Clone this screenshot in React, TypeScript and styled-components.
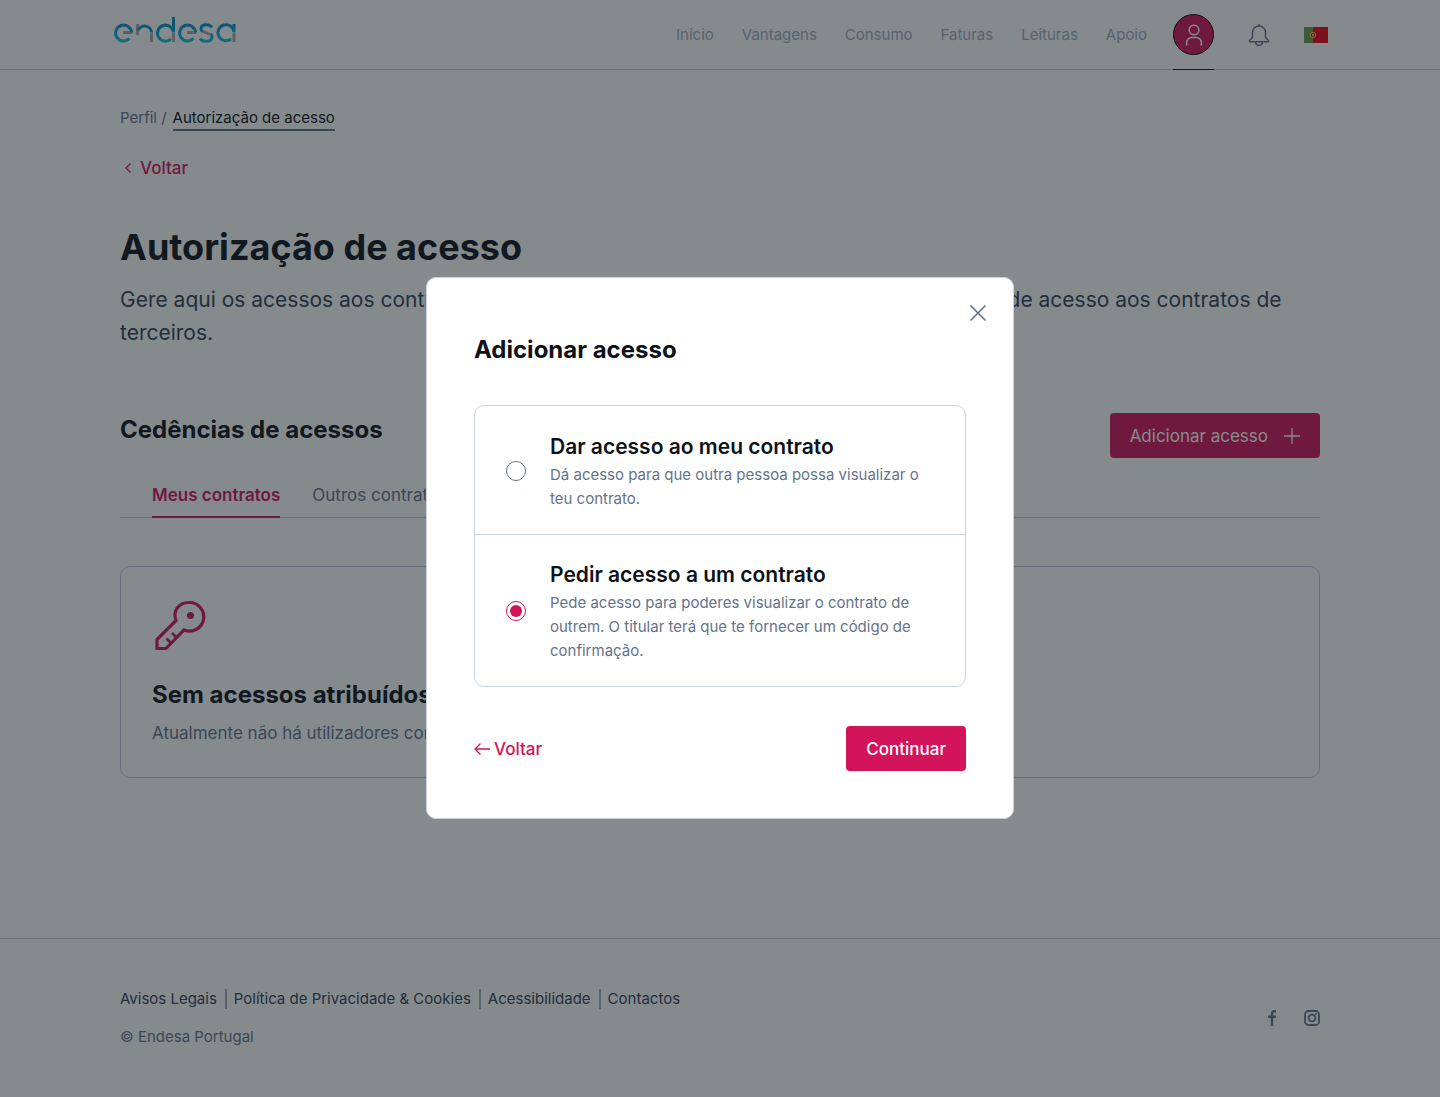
import React, { useState } from "react";
import styled, { createGlobalStyle, css } from "styled-components";

const color = {
  brand: "#d3135a",
  ink: "#0d1219",
  body: "#334155",
  muted: "#64748b",
  soft: "#a0adbf",
  line: "#cbd5e1",
  rule: "#bcc5d6",
};

const GlobalStyle = createGlobalStyle`
  *, *::before, *::after { box-sizing: border-box; }
  body {
    margin: 0;
    background: #fff;
    color: ${color.ink};
    font-family: Inter, "Liberation Sans", sans-serif;
    font-size: 15px;
    line-height: 24px;
  }
  h1, h2, h3, p, ul { margin: 0; padding: 0; }
  ul { list-style: none; }
  a { color: inherit; text-decoration: none; }
  button { font: inherit; border: 0; background: none; padding: 0; cursor: pointer; }
`;

const Page = styled.div`
  display: flex;
  flex-direction: column;
  min-height: 100vh;
`;

const Header = styled.header`
  display: flex;
  justify-content: space-between;
  height: 70px;
  padding: 0 112px 0 114px;
  border-bottom: 1px solid ${color.rule};
`;

const LogoLink = styled.a`
  padding-top: 16px;
`;

const Nav = styled.nav`
  display: flex;
  align-items: center;
  color: ${color.soft};
`;

const NavList = styled.ul`
  display: flex;
  gap: 28px;
  margin-right: 26px;
`;

const AvatarTab = styled.button`
  display: flex;
  align-items: center;
  align-self: stretch;
  margin-bottom: -1px;
  border-bottom: 1px solid ${color.ink};
`;

const Avatar = styled.span`
  display: flex;
  align-items: center;
  justify-content: center;
  width: 41px;
  height: 41px;
  border: 1px solid #000;
  border-radius: 50%;
  background: ${color.brand};
  color: #fff;
`;

const HeaderIcon = styled.button`
  display: flex;
  margin-left: 33px;
  color: ${color.muted};
`;

const Main = styled.main`
  flex: 1;
  width: 100%;
  max-width: 1440px;
  margin: 0 auto;
  padding: 37px 120px 144px;
`;

const Breadcrumb = styled.nav`
  display: flex;
  gap: 6px;
  color: ${color.muted};
  line-height: 22px;
`;

const Current = styled.a`
  color: ${color.ink};
  border-bottom: 2px solid ${color.muted};
`;

const BackLink = styled.a`
  display: inline-flex;
  align-items: center;
  gap: 4px;
  margin-top: 25px;
  color: ${color.brand};
  font-size: 17px;
  font-weight: 500;
`;

const PageTitle = styled.h1`
  margin-top: 36px;
  font-size: 36px;
  font-weight: 700;
  line-height: 56px;
`;

const Lead = styled.p`
  margin-top: 8px;
  color: ${color.body};
  font-size: 21px;
  line-height: 33px;
`;

const SectionHead = styled.div`
  display: flex;
  justify-content: space-between;
  align-items: flex-start;
  margin-top: 64px;
`;

const Heading = styled.h2`
  font-size: 24px;
  font-weight: 700;
  line-height: 34px;
`;

const Primary = styled.button<{ $medium?: boolean }>`
  display: inline-flex;
  align-items: center;
  gap: 16px;
  height: 45px;
  padding: 0 20px;
  border-radius: 4px;
  background: ${color.brand};
  color: #fff;
  font-size: 17px;
  font-weight: ${(p) => (p.$medium ? 500 : 400)};
`;

const Tabs = styled.div`
  display: flex;
  gap: 32px;
  margin-top: 15px;
  padding: 0 32px;
  border-bottom: 1px solid ${color.rule};
`;

const Tab = styled.button<{ $active?: boolean }>`
  height: 45px;
  margin-bottom: -1px;
  border-bottom: 2px solid transparent;
  color: ${color.muted};
  font-size: 17px;
  ${(p) =>
    p.$active &&
    css`
      color: ${color.brand};
      border-color: ${color.brand};
      font-weight: 600;
    `}
`;

const Card = styled.section`
  margin-top: 48px;
  padding: 31px 31px 30px;
  border: 1px solid ${color.rule};
  border-radius: 10px;
  svg { display: block; }
`;

const CardTitle = styled(Heading)`
  margin-top: 24px;
`;

const CardText = styled.p`
  margin-top: 8px;
  color: ${color.muted};
  font-size: 17px;
  line-height: 27px;
`;

const Footer = styled.footer`
  border-top: 1px solid ${color.rule};
`;

const FooterInner = styled.div`
  display: flex;
  justify-content: space-between;
  align-items: center;
  max-width: 1440px;
  margin: 0 auto;
  padding: 48px 120px;
`;

const Links = styled.ul`
  display: flex;
  align-items: center;
  height: 24px;
  color: ${color.body};
  li + li {
    margin-left: 8px;
    padding-left: 7px;
    border-left: 2px solid ${color.soft};
  }
  li { line-height: 20px; }
`;

const Copyright = styled.p`
  margin-top: 14px;
  color: ${color.muted};
`;

const Social = styled.div`
  display: flex;
  gap: 24px;
  color: ${color.muted};
  a { display: flex; }
`;

const Overlay = styled.div`
  position: fixed;
  inset: 0;
  display: flex;
  align-items: center;
  justify-content: center;
  padding-bottom: 1px;
  background: rgba(21, 31, 36, 0.52);
`;

const Dialog = styled.form`
  position: relative;
  width: 588px;
  max-width: 100%;
  padding: 48px 47px 47px;
  border: 1px solid ${color.line};
  border-radius: 10px;
  background: #fff;
`;

const Close = styled.button`
  position: absolute;
  top: 23px;
  right: 23px;
  display: flex;
  color: ${color.muted};
`;

const DialogTitle = styled(Heading)`
  line-height: 48px;
`;

const Options = styled.div`
  margin-top: 31px;
  border: 1px solid ${color.line};
  border-radius: 10px;
`;

const Option = styled.label`
  display: flex;
  align-items: center;
  gap: 24px;
  padding: 25px 31px 23px;
  cursor: pointer;
  & + & {
    padding-top: 24px;
    border-top: 1px solid ${color.line};
  }
`;

const Radio = styled.input`
  appearance: none;
  flex: none;
  width: 20px;
  height: 20px;
  margin: 0;
  border: 1px solid ${color.muted};
  border-radius: 50%;
  &:checked {
    padding: 3px;
    border-color: ${color.brand};
    background: ${color.brand} content-box;
  }
`;

const OptionTitle = styled.strong`
  display: block;
  font-size: 21px;
  font-weight: 600;
  line-height: 32px;
`;

const OptionText = styled.span`
  display: block;
  color: ${color.muted};
`;

const Actions = styled.div`
  display: flex;
  justify-content: space-between;
  align-items: center;
  margin-top: 39px;
`;

const BackButton = styled.button`
  display: inline-flex;
  align-items: center;
  gap: 4px;
  color: ${color.brand};
  font-size: 17px;
  font-weight: 500;
`;

const Logo = () => (
  <svg width="122" height="28" viewBox="0 0 122 28" fill="none" strokeWidth="3">
    <defs>
      <linearGradient id="sea" x1="0" y1="6" x2="0" y2="27" gradientUnits="userSpaceOnUse">
        <stop offset="0" stopColor="#008ccf" />
        <stop offset="1" stopColor="#12c4dc" />
      </linearGradient>
    </defs>
    <g stroke="#b0a9a6">
      <path d="M9 16.5h9M23.5 8v11M37.5 17v9M59.5 17v9M73 16.5h9M120 17v9M87 14.5l9 4" />
    </g>
    <g stroke="url(#sea)">
      <path d="M17.6 16.5A8 8 0 1 0 15.5 22.5" />
      <path d="M24 14.5A7 7 0 0 1 37.5 16.5" />
      <path d="M59.5 1v15.5A8 8 0 1 0 57 23" />
      <path d="M81.6 16.5A8 8 0 1 0 79.5 22.5" />
      <path d="M98 11.5C95.5 7.5 87 7.5 87 13c0 1.500.5 2 1.500 2.500M86 22.500C88.500 26.500 98 26.500 98 20.500c0-1.500-.5-2-1.500-2.500" />
      <path d="M120 8v8.500A8 8 0 1 0 117 23" />
    </g>
  </svg>
);

const UserIcon = () => (
  <svg width="20" height="24" viewBox="0 0 20 24" fill="none" stroke="currentColor" strokeWidth="1.500">
    <circle cx="10" cy="7" r="4.800" />
    <path d="M2.700 22.500v-3a5 5 0 0 1 5-5h4.600a5 5 0 0 1 5 5v3" />
  </svg>
);

const BellIcon = () => (
  <svg width="24" height="24" viewBox="0 0 24 24" fill="none" stroke="currentColor" strokeWidth="1.500" strokeLinejoin="round">
    <path d="M12 1v2M12 3c-4 0-6.500 3-6.500 6.500V14c0 1.500-3 2.500-3 4v.800h19V18c0-1.500-3-2.500-3-4V9.500C18.500 6 16 3 12 3z" />
    <path d="M8.700 19a3.300 3.300 0 0 0 6.600 0" />
  </svg>
);

const FlagIcon = () => (
  <svg width="24" height="16" viewBox="0 0 24 16">
    <path fill="#f00018" d="M0 0h24v16H0z" />
    <path fill="#6f9a50" d="M0 0h9v16H0z" />
    <circle cx="9" cy="8" r="2.600" fill="#e00018" stroke="#f5d327" />
    <circle cx="9" cy="8" r="1" fill="#fff" />
  </svg>
);

const KeyIcon = () => (
  <svg width="56" height="56" viewBox="0 0 56 56" fill="none" stroke={color.brand} strokeWidth="3.200">
    <path d="M5 50.500V41.500L24 22.500C20.500 13 26.500 4.500 37 4.500A14.300 14.300 0 1 1 32 32L14 50.500z" />
    <path d="M14.500 40.500l4.500 4.500M20 35l4.500 4.500" strokeWidth="2.800" />
    <circle cx="38.500" cy="17.500" r="3.500" fill={color.brand} stroke="none" />
  </svg>
);

const options = [
  {
    id: "dar",
    title: "Dar acesso ao meu contrato",
    text: "Dá acesso para que outra pessoa possa visualizar o teu contrato.",
  },
  {
    id: "pedir",
    title: "Pedir acesso a um contrato",
    text: "Pede acesso para poderes visualizar o contrato de outrem. O titular terá que te fornecer um código de confirmação.",
  },
];

export default function App() {
  const [choice, setChoice] = useState("pedir");

  return (
    <>
      <GlobalStyle />
      <Page>
        <Header>
          <LogoLink href="#" aria-label="endesa">
            <Logo />
          </LogoLink>
          <Nav>
            <NavList>
              {["Início", "Vantagens", "Consumo", "Faturas", "Leituras", "Apoio"].map((item) => (
                <li key={item}>
                  <a href="#">{item}</a>
                </li>
              ))}
            </NavList>
            <AvatarTab aria-label="Perfil">
              <Avatar>
                <UserIcon />
              </Avatar>
            </AvatarTab>
            <HeaderIcon aria-label="Notificações">
              <BellIcon />
            </HeaderIcon>
            <HeaderIcon aria-label="Português">
              <FlagIcon />
            </HeaderIcon>
          </Nav>
        </Header>

        <Main>
          <Breadcrumb>
            <a href="#">Perfil /</a>
            <Current href="#">Autorização de acesso</Current>
          </Breadcrumb>
          <BackLink href="#">
            <svg width="16" height="16" viewBox="0 0 16 16" fill="none" stroke="currentColor" strokeWidth="1.300">
              <path d="M10.500 3.500L6 8l4.500 4.500" />
            </svg>
            Voltar
          </BackLink>
          <PageTitle>Autorização de acesso</PageTitle>
          <Lead>
            Gere aqui os acessos aos contratos que tens associados à tua Área Privada, ou então, pede acesso aos
            contratos de terceiros.
          </Lead>

          <SectionHead>
            <Heading>Cedências de acessos</Heading>
            <Primary>
              Adicionar acesso
              <svg width="16" height="16" viewBox="0 0 16 16" fill="none" stroke="currentColor" strokeWidth="1.300">
                <path d="M8 0v16M0 8h16" />
              </svg>
            </Primary>
          </SectionHead>
          <Tabs role="tablist">
            <Tab role="tab" $active>
              Meus contratos
            </Tab>
            <Tab role="tab">Outros contratos</Tab>
          </Tabs>
          <Card>
            <KeyIcon />
            <CardTitle as="h3">Sem acessos atribuídos</CardTitle>
            <CardText>Atualmente não há utilizadores com acesso.</CardText>
          </Card>
        </Main>

        <Footer>
          <FooterInner>
            <div>
              <Links>
                {["Avisos Legais", "Política de Privacidade & Cookies", "Acessibilidade", "Contactos"].map((item) => (
                  <li key={item}>
                    <a href="#">{item}</a>
                  </li>
                ))}
              </Links>
              <Copyright>© Endesa Portugal</Copyright>
            </div>
            <Social>
              <a href="#" aria-label="Facebook">
                <svg width="16" height="18" viewBox="0 0 16 18" fill="none" stroke="currentColor" strokeWidth="2.500">
                  <path d="M12 2.200h-1.500C8.800 2.200 8 3 8 4.500V17M4 7.800h8" />
                </svg>
              </a>
              <a href="#" aria-label="Instagram">
                <svg width="16" height="18" viewBox="0 0 16 18" fill="none" stroke="currentColor" strokeWidth="1.800">
                  <rect x="1" y="2" width="14" height="14" rx="3.500" />
                  <circle cx="8" cy="9" r="3.400" />
                  <circle cx="12" cy="5" r="1" fill="currentColor" stroke="none" />
                </svg>
              </a>
            </Social>
          </FooterInner>
        </Footer>
      </Page>

      <Overlay>
        <Dialog role="dialog" aria-modal="true" aria-labelledby="dialog-title" onSubmit={(e) => e.preventDefault()}>
          <Close type="button" aria-label="Fechar">
            <svg width="24" height="24" viewBox="0 0 24 24" fill="none" stroke="currentColor" strokeWidth="1.700" strokeLinecap="round">
              <path d="M5 5l14 14M19 5L5 19" />
            </svg>
          </Close>
          <DialogTitle id="dialog-title">Adicionar acesso</DialogTitle>
          <Options role="radiogroup" aria-labelledby="dialog-title">
            {options.map((o) => (
              <Option key={o.id} htmlFor={o.id}>
                <Radio
                  type="radio"
                  id={o.id}
                  name="tipo"
                  checked={choice === o.id}
                  onChange={() => setChoice(o.id)}
                />
                <span>
                  <OptionTitle>{o.title}</OptionTitle>
                  <OptionText>{o.text}</OptionText>
                </span>
              </Option>
            ))}
          </Options>
          <Actions>
            <BackButton type="button">
              <svg width="16" height="14" viewBox="0 0 16 14" fill="none" stroke="currentColor" strokeWidth="1.300">
                <path d="M16 7H1M6.500 1.500L1 7l5.500 5.500" />
              </svg>
              Voltar
            </BackButton>
            <Primary type="submit" $medium>
              Continuar
            </Primary>
          </Actions>
        </Dialog>
      </Overlay>
    </>
  );
}
